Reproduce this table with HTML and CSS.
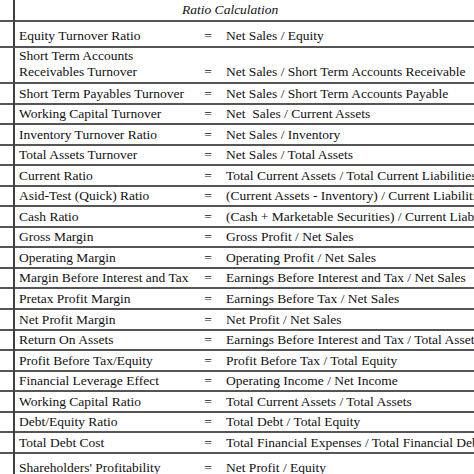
FILE: index.html
```html
<!DOCTYPE html>
<html>
<head>
<meta charset="utf-8">
<link rel="stylesheet" href="styles.css">
</head>
<body>
<div class="sheet">
  <div class="row head"><div class="gutter"></div><div class="title">Ratio Calculation</div></div>
  <div class="row first"><div class="gutter"></div><div class="name">Equity Turnover Ratio</div><div class="eq">=</div><div class="formula">Net Sales / Equity</div></div>
  <div class="row double"><div class="gutter"></div><div class="name">Short Term Accounts<br>Receivables Turnover</div><div class="eq">=</div><div class="formula">Net Sales / Short Term Accounts Receivable</div></div>
  <div class="row"><div class="gutter"></div><div class="name">Short Term Payables Turnover</div><div class="eq">=</div><div class="formula">Net Sales / Short Term Accounts Payable</div></div>
  <div class="row"><div class="gutter"></div><div class="name">Working Capital Turnover</div><div class="eq">=</div><div class="formula">Net&nbsp; Sales / Current Assets</div></div>
  <div class="row"><div class="gutter"></div><div class="name">Inventory Turnover Ratio</div><div class="eq">=</div><div class="formula">Net Sales / Inventory</div></div>
  <div class="row"><div class="gutter"></div><div class="name">Total Assets Turnover</div><div class="eq">=</div><div class="formula">Net Sales / Total Assets</div></div>
  <div class="row"><div class="gutter"></div><div class="name">Current Ratio</div><div class="eq">=</div><div class="formula">Total Current Assets / Total Current Liabilities</div></div>
  <div class="row"><div class="gutter"></div><div class="name">Asid-Test (Quick) Ratio</div><div class="eq">=</div><div class="formula">(Current Assets - Inventory) / Current Liabilities</div></div>
  <div class="row"><div class="gutter"></div><div class="name">Cash Ratio</div><div class="eq">=</div><div class="formula">(Cash + Marketable Securities) / Current Liabilities</div></div>
  <div class="row"><div class="gutter"></div><div class="name">Gross Margin</div><div class="eq">=</div><div class="formula">Gross Profit / Net Sales</div></div>
  <div class="row"><div class="gutter"></div><div class="name">Operating Margin</div><div class="eq">=</div><div class="formula">Operating Profit / Net Sales</div></div>
  <div class="row"><div class="gutter"></div><div class="name">Margin Before Interest and Tax</div><div class="eq">=</div><div class="formula">Earnings Before Interest and Tax / Net Sales</div></div>
  <div class="row"><div class="gutter"></div><div class="name">Pretax Profit Margin</div><div class="eq">=</div><div class="formula">Earnings Before Tax / Net Sales</div></div>
  <div class="row"><div class="gutter"></div><div class="name">Net Profit Margin</div><div class="eq">=</div><div class="formula">Net Profit / Net Sales</div></div>
  <div class="row"><div class="gutter"></div><div class="name">Return On Assets</div><div class="eq">=</div><div class="formula">Earnings Before Interest and Tax / Total Assets</div></div>
  <div class="row"><div class="gutter"></div><div class="name">Profit Before Tax/Equity</div><div class="eq">=</div><div class="formula">Profit Before Tax / Total Equity</div></div>
  <div class="row"><div class="gutter"></div><div class="name">Financial Leverage Effect</div><div class="eq">=</div><div class="formula">Operating Income / Net Income</div></div>
  <div class="row"><div class="gutter"></div><div class="name">Working Capital Ratio</div><div class="eq">=</div><div class="formula">Total Current Assets / Total Assets</div></div>
  <div class="row"><div class="gutter"></div><div class="name">Debt/Equity Ratio</div><div class="eq">=</div><div class="formula">Total Debt / Total Equity</div></div>
  <div class="row"><div class="gutter"></div><div class="name">Total Debt Cost</div><div class="eq">=</div><div class="formula">Total Financial Expenses / Total Financial Debt</div></div>
  <div class="row last"><div class="gutter"></div><div class="name">Shareholders' Profitability</div><div class="eq">=</div><div class="formula">Net Profit / Equity</div></div>
</div>
</body>
</html>
```
FILE: styles.css
```css
html, body {
  margin: 0;
  padding: 0;
  background: #fff;
  overflow: hidden;
}
body {
  width: 474px;
  height: 474px;
  font-family: "Liberation Serif", "Times New Roman", serif;
  font-size: 13.5px;
  color: #111;
}
.sheet {
  display: flex;
  flex-direction: column;
  width: 474px;
}
.row {
  display: flex;
  align-items: flex-end;
  box-sizing: border-box;
  height: 20.56px;
  border-bottom: 2px solid #555;
  white-space: nowrap;
  line-height: 16px;
  padding-bottom: 1px;
  flex-shrink: 0;
}
.row.head { height: 22px; padding-bottom: 2px; }
.row.first { height: 26px; padding-bottom: 2px; }
.row.double { height: 36px; padding-bottom: 2px; }
.row.last { height: 26px; padding-bottom: 2px; }
.gutter {
  align-self: stretch;
  width: 13px;
  border-right: 2px solid #404040;
  flex-shrink: 0;
}
.row .gutter { margin-bottom: -3px; }
.name {
  width: 176px;
  padding-left: 4px;
  flex-shrink: 0;
}
.eq {
  width: 26px;
  text-align: center;
  flex-shrink: 0;
}
.formula {
  padding-left: 5px;
  flex-shrink: 0;
}
.title {
  font-style: italic;
  padding-left: 167px;
}
```
